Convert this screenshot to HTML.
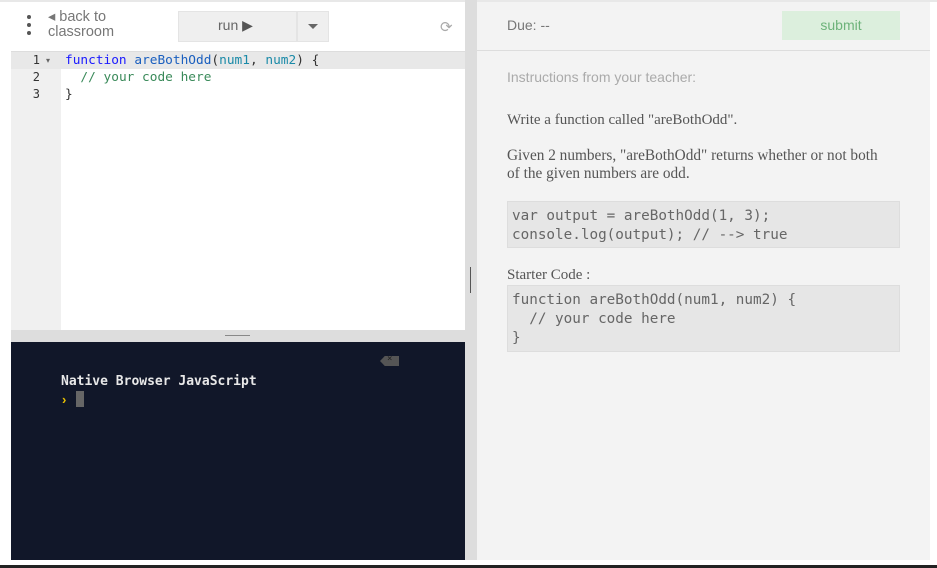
<!DOCTYPE html>
<html><head><style>
*{margin:0;padding:0;box-sizing:border-box}
body{width:937px;height:568px;background:#fff;position:relative;overflow:hidden;font-family:"Liberation Sans",sans-serif}
.a{position:absolute}
.mono{font-family:"DejaVu Sans Mono","Liberation Mono",monospace}
.code{font-size:12.8px;line-height:17px}
</style></head><body>
<div class="a" style="left:0;top:0;width:937px;height:2px;background:#e8e8e8"></div>
<!-- left header -->
<div class="a" style="left:27px;top:15px;width:4px;height:4px;border-radius:2px;background:#555"></div>
<div class="a" style="left:27px;top:23px;width:4px;height:4px;border-radius:2px;background:#555"></div>
<div class="a" style="left:27px;top:31px;width:4px;height:4px;border-radius:2px;background:#555"></div>
<div class="a" style="left:48px;top:10px;font-size:14.5px;line-height:15px;color:#777">◂ back to<br>classroom</div>
<div class="a" style="left:178px;top:11px;width:119px;height:31px;background:#efefef;border:1px solid #e4e4e4"></div>
<div class="a" style="left:297px;top:11px;width:32px;height:31px;background:#efefef;border:1px solid #e4e4e4"></div>
<div class="a" style="left:218px;top:17px;font-size:14px;color:#666">run <span style="color:#555">▶</span></div>
<div class="a" style="left:308px;top:24px;border-left:5px solid transparent;border-right:5px solid transparent;border-top:5px solid #666"></div>
<div class="a" style="left:440px;top:18px;font-size:15px;color:#aaa">⟳</div>
<!-- editor -->
<div class="a" style="left:11px;top:51px;width:454px;height:1px;background:#ddd"></div>
<div class="a" style="left:11px;top:52px;width:50px;height:278px;background:#f0f0f0"></div>
<div class="a" style="left:11px;top:52px;width:454px;height:17px;background:#e8e8e8"></div>
<div class="a mono code" style="left:11px;top:52px;width:29px;text-align:right;color:#333;font-size:12px">1<br>2<br>3</div>
<div class="a" style="left:46px;top:56px;font-size:8px;color:#666">▾</div>
<div class="a mono code" style="left:65px;top:52px;color:#333;white-space:pre"><span style="color:#1a1aff">function</span> <span style="color:#1a5fbf">areBothOdd</span>(<span style="color:#1a8aa8">num1</span>, <span style="color:#1a8aa8">num2</span>) {
  <span style="color:#3a8a5a">// your code here</span>
}</div>
<!-- resize bar -->
<div class="a" style="left:11px;top:330px;width:454px;height:12px;background:#ddd"></div>
<div class="a" style="left:225px;top:335px;width:25px;height:1px;background:#888"></div>
<!-- console -->
<div class="a" style="left:11px;top:342px;width:454px;height:218px;background:#111729"></div>
<div class="a" style="left:380px;top:356px;width:19px;height:10px;background:#555;clip-path:polygon(25% 0,100% 0,100% 100%,25% 100%,0 50%)"></div>
<div class="a mono" style="left:387px;top:354px;font-size:9px;color:#222">×</div>
<div class="a mono" style="left:61px;top:374px;font-size:13px;font-weight:bold;color:#e8e8e8">Native Browser JavaScript</div>
<div class="a" style="left:62px;top:392px;font-size:13px;color:#e8c000;font-weight:bold">›</div>
<div class="a" style="left:76px;top:391px;width:8px;height:16px;background:#666"></div>
<!-- divider -->
<div class="a" style="left:465px;top:0;width:12px;height:560px;background:#ddd"></div>
<div class="a" style="left:470px;top:267px;width:1px;height:26px;background:#555"></div>
<!-- right panel -->
<div class="a" style="left:477px;top:2px;width:453px;height:558px;background:#f3f3f3"></div>
<div class="a" style="left:477px;top:50px;width:453px;height:1px;background:#ddd"></div>
<div class="a" style="left:507px;top:17px;font-size:14px;color:#777">Due: --</div>
<div class="a" style="left:782px;top:11px;width:118px;height:29px;background:#dcefdd;color:#6db37a;font-size:14px;text-align:center;line-height:28px">submit</div>
<div class="a" style="left:507px;top:69px;font-size:14px;color:#aaa">Instructions from your teacher:</div>
<div class="a" style="left:507px;top:111px;width:390px;font-family:'Liberation Serif',serif;font-size:15px;line-height:18px;color:#555">Write a function called "areBothOdd".</div>
<div class="a" style="left:507px;top:147px;width:386px;font-family:'Liberation Serif',serif;font-size:15.3px;line-height:18px;color:#555">Given 2 numbers, "areBothOdd" returns whether or not both of the given numbers are odd.</div>
<div class="a mono" style="left:507px;top:201px;width:393px;height:47px;background:#e6e6e6;border:1px solid #ddd;padding:5px 4px;font-size:14.3px;line-height:19px;color:#666;white-space:pre">var output = areBothOdd(1, 3);
console.log(output); // --> true</div>
<div class="a" style="left:507px;top:267px;font-family:'Liberation Serif',serif;font-size:15px;color:#555">Starter Code :</div>
<div class="a mono" style="left:507px;top:285px;width:393px;height:67px;background:#e6e6e6;border:1px solid #ddd;padding:5px 4px;font-size:14.3px;line-height:19px;color:#666;white-space:pre">function areBothOdd(num1, num2) {
  // your code here
}</div>
<div class="a" style="left:0;top:565px;width:937px;height:3px;background:#222"></div>
</body></html>
